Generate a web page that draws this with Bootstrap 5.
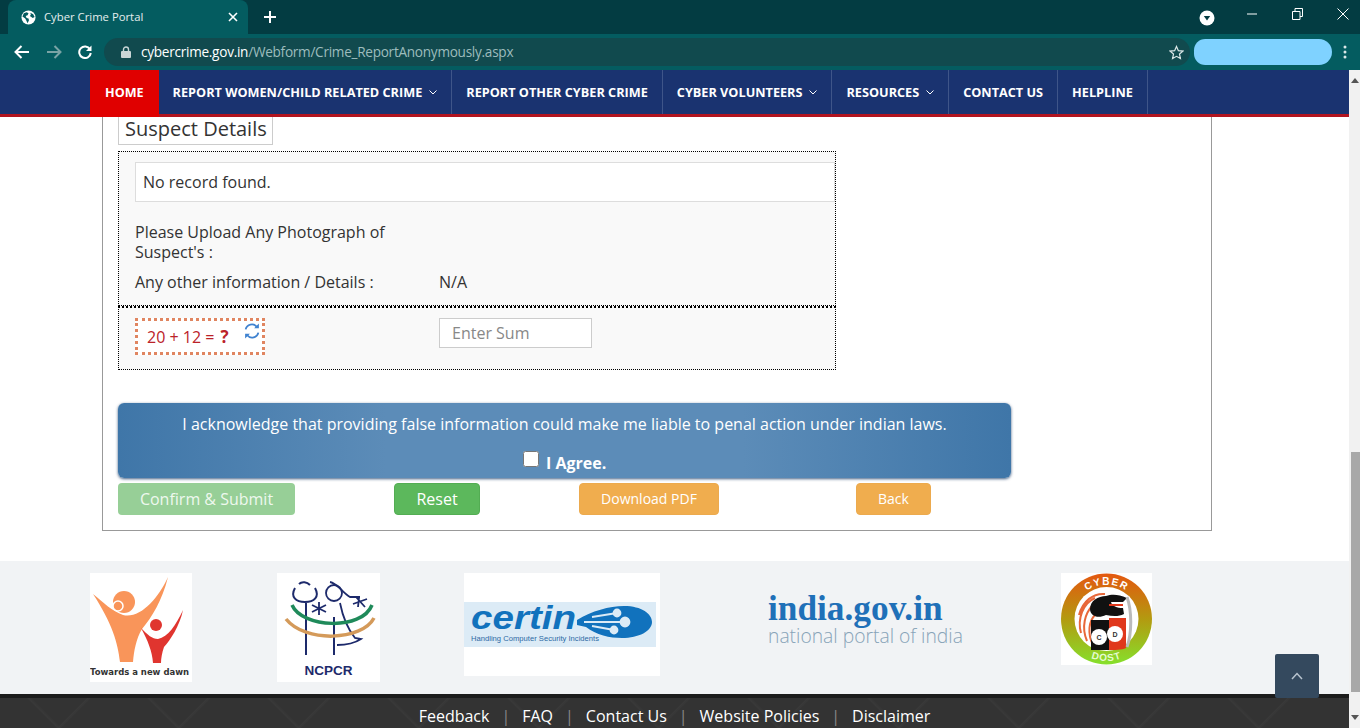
<!DOCTYPE html>
<html lang="en">
<head>
<meta charset="utf-8">
<title>Cyber Crime Portal</title>
<link href="https://cdn.jsdelivr.net/npm/bootstrap@5.3.0/dist/css/bootstrap.min.css" rel="stylesheet">
<style>
html,body{height:728px;overflow:hidden;margin:0}
body{font-family:"Open Sans","Noto Sans",sans-serif;font-size:16px;color:#333;background:#fff}
.tabstrip{height:34px;background:#033c42;padding-left:8px}
.tabshape{width:240px;height:34px;background:#045c60;border-radius:8px 8px 0 0;color:#e4eeee;font-size:11.3px;padding:0 10px 0 13px}
.tabplus{margin-left:16px}
.winbtns{margin-top:-6px}
.wincircle{margin-top:4px;margin-bottom:-4px}
.toolbar{height:36px;background:#045c60;padding-left:14px;padding-right:0}
.omni{width:1086px;height:28px;margin-left:12px;border-radius:14px;background:#114a4e;padding:0 6px 0 17px;font-size:13.6px;color:#9dbcbd}
.omni b{font-weight:400;color:#fff}
.urltxt{margin-left:10px;letter-spacing:-.02em}
.blob{width:138px;height:26px;margin-left:4px;background:#7fd2ff;border-radius:13px 15px 15px 13px}
.kebab{margin-right:13px}
.pagewrap{height:658px}
.mainside{width:1349px}
.sbar{width:11px;background:#f1f1f1;padding:8px 0 8px 2px}
.sthumb{width:9px;height:240px;background:#a8a8a8;margin-top:369px}
.topnav{height:47px;background:#1a3370;border-bottom:3px solid #b1141f;padding-left:90px;flex-wrap:nowrap}
.topnav a{display:flex;align-items:center;gap:7px;height:44px;padding:1px 14px 0;color:#fff;font-weight:700;font-size:12.7px;text-decoration:none;border-right:1px solid #3f5589;white-space:nowrap}
.topnav a.homelink{background:#e00000;height:47px;padding:1px 15px 2px;border-right:0;margin-bottom:-3px;font-size:12.6px}
.formbox{width:1110px;margin-left:102px;border:1px solid #999;border-top:0;padding:0 15px 15px;height:414px}
.legendbox{display:inline-block;height:28px;padding:0 5px 0 6px;border:1px solid #ccc;border-top:0;font-size:20px;line-height:24px;color:#333;margin-bottom:6px;vertical-align:top}
.dotbox{width:718px;border:1px dotted #000;background:#f9f9f9;padding:10px 0 0 16px}
.dotbox.firstbox{height:155px}
.dotbox.secondbox{height:64px;border-top:2px dotted #000;padding-top:10px}
.norec{height:40px;background:#fff;border:1px solid #ddd;padding-left:7px;line-height:38px;margin-bottom:20px}
.labelcol{width:304px;flex:none;line-height:20px}
.labelcol span{display:block;width:280px}
.inforow{margin-top:10px;line-height:20px}
.captcha{width:130px;height:37px;border:3px dotted #e08560;background:#fff;color:#bb2229;padding:4px 0 0 9px;line-height:24px;position:relative}
.captcha b{margin-left:2px;font-size:17px}
.captcha svg{position:absolute;left:105px;top:1px}
.sumbox{width:153px;height:30px;border:1px solid #ccc;border-radius:0;background:#fff;padding:0 12px;font-family:inherit;font-size:16px;color:#777}
.sumbox::placeholder{color:#888;opacity:1}
.ackpanel{width:893px;height:75px;margin-top:33px;border-radius:6px;background:linear-gradient(90deg,#3f76a8 0,#5c8cb8 30%,#5c8cb8 70%,#3f76a8 100%);box-shadow:0 1px 3px rgba(0,40,90,.75);color:#fff;text-align:center;padding-top:10px;line-height:22px}
.ackcheck{width:16px;height:16px;vertical-align:2px;margin:0 3px 0 0;appearance:auto;-webkit-appearance:auto}
.agree{margin-top:16px;font-weight:700}
.actbtns{margin-top:5px;height:32px}
.actbtn{height:32px;padding:0;border-radius:4px;color:#fff;font-family:inherit;border:1px solid transparent}
.btn-confirm{width:177px;background:#97cf97;font-size:16px;color:#eef8ee}
.btn-reset{width:86px;margin-left:99px;background:#5cb85c;border-color:#53ad53;font-size:16px}
.btn-pdf{width:140px;margin-left:99px;background:#f0ad4e;border-color:#ecaa4e;font-size:14px;padding-bottom:2px}
.btn-back{width:75px;margin-left:137px;background:#f0ad4e;border-color:#ecaa4e;font-size:14px;padding-bottom:2px}
.logostrip{height:133px;margin-top:30px;background:#f1f3f5;padding:12px 0 0 90px;align-items:flex-start}
.logo1{width:102px;height:109px;background:#fff}
.logo2{width:103px;height:109px;margin-left:85px;background:#fff}
.logo3{width:196px;height:103px;margin-left:84px;background:#fff}
.logo4{width:198px;margin-left:108px;padding-top:20px}
.logo5{width:91px;height:92px;margin-left:95px;background:#fff}
.indiatop{font-family:"Liberation Serif",serif;font-weight:700;font-size:35.3px;line-height:32px;color:#1f70b8}
.indiabot{font-weight:300;font-size:19.3px;line-height:22px;color:#88a3b8;white-space:nowrap}
.footerbar{height:34px;background-color:#333;border-top:4px solid #1c1c1c;background-image:linear-gradient(135deg,transparent 48%,#393939 49%,transparent 51%),linear-gradient(45deg,transparent 48%,#393939 49%,transparent 51%);background-size:120px 60px;color:#fff;font-size:16px;line-height:36px;gap:12px;overflow:hidden}
.footerbar a{color:#fff;text-decoration:none}
.footerbar i{font-style:normal;color:#888;font-size:16px}
.totop{position:absolute;left:1275px;top:654px;width:44px;height:44px;background:#34495e;border-radius:2px;display:flex;align-items:center;justify-content:center}
</style>
</head>
<body>
<div class="tabstrip d-flex align-items-center">
  <div class="tabshape d-flex align-items-center">
    <svg width="15" height="15" viewBox="0 0 16 16"><circle cx="8" cy="8" r="7.5" fill="#fff"/><path d="M3 3.5l3-1 2 1-1 2-2 1 1 2 2 .5.5 2-1.5 3-1.5-3-1-2-3-2zM10 3l3 1.5 1.5 3-2 1-1.5-1-1.5-1 1-1.5z" fill="#045c60"/></svg>
    <span class="ms-2 flex-grow-1">Cyber Crime Portal</span>
    <svg width="10" height="10" viewBox="0 0 10 10"><path d="M1 1l8 8M9 1l-8 8" stroke="#fff" stroke-width="1.6"/></svg>
  </div>
  <svg class="tabplus" width="12" height="12" viewBox="0 0 12 12"><path d="M6 0v12M0 6h12" stroke="#fff" stroke-width="2"/></svg>
  <div class="ms-auto d-flex align-items-center winbtns">
    <svg class="wincircle" width="16" height="16" viewBox="0 0 16 16"><circle cx="8" cy="8" r="7.5" fill="#fff"/><path d="M4.8 6h6.4L8 10.5z" fill="#033c42"/></svg>
    <svg style="margin-left:32px" width="10" height="10" viewBox="0 0 10 10"><path d="M0 5h10" stroke="#fff"/></svg>
    <svg style="margin-left:35px" width="11" height="12" viewBox="0 0 11 12"><path d="M.5 3.5h7.5v8H.5zM3 3.5V.5h7.5v8H8" fill="none" stroke="#fff"/></svg>
    <svg style="margin-left:34px;margin-right:11px" width="12" height="12" viewBox="0 0 12 12"><path d="M.5.5l11 11M11.5.5l-11 11" stroke="#fff"/></svg>
  </div>
</div>
<div class="toolbar d-flex align-items-center">
  <svg width="16" height="14" viewBox="0 0 16 14"><path d="M15 7H2M7.5 1L1.5 7l6 6" fill="none" stroke="#fff" stroke-width="2"/></svg>
  <svg class="ms-3" width="16" height="14" viewBox="0 0 16 14"><path d="M1 7h13M8.500 1l6 6-6 6" fill="none" stroke="#7aa3a5" stroke-width="2"/></svg>
  <svg class="ms-3" width="14" height="14" viewBox="0 0 14 14"><path d="M12 4.200A5.800 5.800 0 1 0 12.800 8" fill="none" stroke="#fff" stroke-width="2"/><path d="M13.500 .5v5.500H8z" fill="#fff"/></svg>
  <div class="omni d-flex align-items-center">
    <svg width="10" height="12" viewBox="0 0 10 12"><rect y="5" width="10" height="7" rx="1" fill="#c9d6d6"/><path d="M2.500 5V3.500a2.500 2.500 0 0 1 5 0V5" fill="none" stroke="#c9d6d6" stroke-width="1.400"/></svg>
    <span class="urltxt flex-grow-1"><b>cybercrime.gov.in</b>/Webform/Crime_ReportAnonymously.aspx</span>
    <svg width="15" height="15" viewBox="0 0 16 16"><path d="M8 1.500l2 4.500 4.800.5-3.600 3.200 1 4.800L8 12.100l-4.200 2.400 1-4.800L1.200 6.500 6 6z" fill="none" stroke="#dbe7e7" stroke-width="1.300"/></svg>
  </div>
  <div class="blob"></div>
  <svg class="ms-auto kebab" width="4" height="14" viewBox="0 0 4 14"><circle cx="2" cy="2" r="1.500" fill="#dbe7e7"/><circle cx="2" cy="7" r="1.500" fill="#dbe7e7"/><circle cx="2" cy="12" r="1.500" fill="#dbe7e7"/></svg>
</div>
<div class="pagewrap d-flex">
  <div class="mainside">
    <nav class="topnav d-flex">
      <a class="homelink" href="#">HOME</a>
      <a href="#">REPORT WOMEN/CHILD RELATED CRIME <svg width="8" height="5" viewBox="0 0 8 5"><path d="M.5.500L4 4 7.500.5" fill="none" stroke="#fff"/></svg></a>
      <a href="#">REPORT OTHER CYBER CRIME</a>
      <a href="#">CYBER VOLUNTEERS <svg width="8" height="5" viewBox="0 0 8 5"><path d="M.5.500L4 4 7.500.5" fill="none" stroke="#fff"/></svg></a>
      <a href="#">RESOURCES <svg width="8" height="5" viewBox="0 0 8 5"><path d="M.5.500L4 4 7.500.5" fill="none" stroke="#fff"/></svg></a>
      <a href="#">CONTACT US</a>
      <a href="#">HELPLINE</a>
    </nav>
    <div>
      <div class="formbox">
        <div class="legendbox">Suspect Details</div>
        <div class="dotbox firstbox">
          <div class="norec">No record found.</div>
          <div class="d-flex"><div class="labelcol"><span>Please Upload Any Photograph of Suspect's :</span></div></div>
          <div class="d-flex inforow"><div class="labelcol">Any other information / Details :</div><div>N/A</div></div>
        </div>
        <div class="dotbox secondbox d-flex">
          <div class="labelcol">
            <div class="captcha">20 + 12 = <b>?</b>
              <svg width="18" height="18" viewBox="0 0 17 17"><path d="M2.500 7a6 6 0 0 1 10.500-2.500M14.500 10A6 6 0 0 1 4 12.500" fill="none" stroke="#3f82d0" stroke-width="1.700"/><path d="M15 1.500v4.500h-4.500zM2 15.500V11h4.500z" fill="#3f82d0"/></svg>
            </div>
          </div>
          <input class="sumbox" type="text" placeholder="Enter Sum">
        </div>
        <div class="ackpanel">
          <div>I acknowledge that providing false information could make me liable to penal action under indian laws.</div>
          <div class="agree"><input class="ackcheck" type="checkbox"> I Agree.</div>
        </div>
        <div class="actbtns d-flex">
          <button class="actbtn btn-confirm" type="button">Confirm &amp; Submit</button>
          <button class="actbtn btn-reset" type="button">Reset</button>
          <button class="actbtn btn-pdf" type="button">Download PDF</button>
          <button class="actbtn btn-back" type="button">Back</button>
        </div>
      </div>
      <div class="logostrip d-flex">
        <div class="logo1">
          <svg width="102" height="109" viewBox="0 0 102 109">
            <path d="M3 21C14 30 22 38 33 42C50 46 68 26 78 4C72 28 62 44 52 56C46 66 44 78 43 89L30 89C28 70 22 50 3 21Z" fill="#f9955a"/>
            <circle cx="34" cy="29" r="11" fill="#f9955a"/><circle cx="28" cy="33" r="5" fill="#f9955a" stroke="#fff" stroke-width="1.500"/>
            <path d="M51 55C58 62 62 66 68 66C78 64 86 52 93 37C90 52 80 68 74 74C72 80 71 85 71 90L63 90C62 78 58 68 51 55Z" fill="#e0352f"/>
            <circle cx="66" cy="52" r="6" fill="#e0352f"/>
            <text x="0" y="102" textLength="99" lengthAdjust="spacingAndGlyphs" font-family="DejaVu Sans,sans-serif" font-weight="700" font-size="8" fill="#333">Towards a new dawn</text>
          </svg>
        </div>
        <div class="logo2">
          <svg width="103" height="109" viewBox="0 0 103 109">
            <path d="M18 15C13 24 19 29 28 29C37 29 43 24 38 15M22 11C25 8 30 9 33 12M29 29v53M57 44v38" fill="none" stroke="#1d2a6b" stroke-width="2"/>
            <circle cx="57" cy="20" r="8" fill="none" stroke="#1d2a6b" stroke-width="1.800"/>
            <path d="M53 9C60 10 66 20 73 24L83 24M63 30C66 45 70 55 78 65L84 66C78 70 70 72 60 72" fill="none" stroke="#1d2a6b" stroke-width="1.800"/>
            <path d="M35 32l14 7M35 39l14-7M42 29v13M76 31l14-5M79 24l9 10M82 25l-1 9" stroke="#1d2a6b" stroke-width="1.800"/>
            <path d="M15 32C25 55 85 58 95 32" fill="none" stroke="#1f8a5a" stroke-width="3.500"/>
            <path d="M9 46C28 70 85 68 97 45" fill="none" stroke="#d49a5a" stroke-width="3.500"/>
            <text x="51.500" y="102" text-anchor="middle" font-family="Liberation Sans,sans-serif" font-weight="700" font-size="13.500" fill="#1d2a6b">NCPCR</text>
          </svg>
        </div>
        <div class="logo3">
          <svg width="196" height="103" viewBox="0 0 196 103">
            <rect y="29" width="192" height="45" fill="#dcebf6"/>
            <path d="M113 47C128 38 145 33 160 33C178 33 188 41 188 49C188 58 175 65 158 65C146 65 132 62 122 54L113 52Z" fill="#1172bd"/>
            <g stroke="#dcebf6" stroke-width="1.800" fill="#dcebf6"><path d="M120 49h41M128 44l25-4M128 53l22 4" fill="none"/><circle cx="153" cy="40" r="3.500"/><circle cx="161" cy="49" r="4.500"/><circle cx="150" cy="57" r="3.500"/></g>
            <text x="7" y="56" textLength="105" lengthAdjust="spacingAndGlyphs" font-family="Liberation Sans,sans-serif" font-style="italic" font-weight="700" font-size="34" fill="#1172bd">certin</text>
            <text x="7" y="68" textLength="128" lengthAdjust="spacingAndGlyphs" font-family="Liberation Sans,sans-serif" font-size="7" fill="#2c6aa5">Handling Computer Security Incidents</text>
          </svg>
        </div>
        <div class="logo4">
          <div class="indiatop">india.gov.in</div>
          <div class="indiabot">national portal of india</div>
        </div>
        <div class="logo5">
          <svg width="91" height="92" viewBox="0 0 91 92">
            <defs>
              <linearGradient id="ringg" x1="0" y1="0" x2="0" y2="1"><stop offset="0" stop-color="#e4570f"/><stop offset=".5" stop-color="#b39a10"/><stop offset="1" stop-color="#86e02c"/></linearGradient>
              <path id="arcCyber" d="M11 46a34.500 34.500 0 0 1 69 0"/>
              <path id="arcDost" d="M3.500 46A42 42 0 0 0 87.500 46"/>
            </defs>
            <circle cx="45.500" cy="46" r="45.500" fill="url(#ringg)"/>
            <circle cx="45.500" cy="46" r="32" fill="#fff"/>
            <path d="M18 42c4-14 14-22 26-21M20 60c-4-14 2-30 14-35M26 68c-6-14-2-28 6-36M32 72c-6-12-4-24 2-30" fill="none" stroke="#e8683a" stroke-width="2"/>
            <path d="M29 36c0-8 8-13 16-13 6-2 12-2 21 2l-4 4H50c1 4 6 6 12 6l1 6c-6 3-12 2-18 1-8 4-16 1-16-6z" fill="#111"/>
            <path d="M48 31h14v2H48z" fill="#e0381c"/>
            <rect x="30" y="47" width="18" height="30" fill="#111"/>
            <path d="M48 45h17v30c-4 2-12 2-17 2z" fill="#e0381c"/>
            <path d="M66 24c5 14 5 36 0 50" fill="none" stroke="#bbb" stroke-width="3"/>
            <circle cx="38" cy="64" r="8" fill="#fff"/><circle cx="54" cy="61" r="8" fill="#fff"/>
            <text x="38" y="67" text-anchor="middle" font-family="Liberation Sans,sans-serif" font-weight="700" font-size="7" fill="#333">C</text>
            <text x="54" y="64" text-anchor="middle" font-family="Liberation Sans,sans-serif" font-weight="700" font-size="7" fill="#333">D</text>
            <text font-family="Liberation Sans,sans-serif" font-weight="700" font-size="10" letter-spacing="1.500" fill="#fff"><textPath href="#arcCyber" startOffset="50%" text-anchor="middle">CYBER</textPath></text>
            <text font-family="Liberation Sans,sans-serif" font-weight="700" font-size="10" letter-spacing="1" fill="#e6fbd0"><textPath href="#arcDost" startOffset="50%" text-anchor="middle">DOST</textPath></text>
          </svg>
        </div>
      </div>
      <div class="footerbar d-flex justify-content-center">
        <a href="#">Feedback</a><i>|</i><a href="#">FAQ</a><i>|</i><a href="#">Contact Us</a><i>|</i><a href="#">Website Policies</a><i>|</i><a href="#">Disclaimer</a>
      </div>
    </div>
  </div>
  <div class="sbar d-flex flex-column">
    <svg width="8" height="5" viewBox="0 0 8 5"><path d="M4 0l4 5H0z" fill="#555"/></svg>
    <div class="sthumb"></div>
    <svg class="mt-auto" width="8" height="5" viewBox="0 0 8 5"><path d="M0 0h8L4 5z" fill="#555"/></svg>
  </div>
</div>
<a class="totop" href="#" aria-label="Back to top"><svg width="12" height="8" viewBox="0 0 12 8"><path d="M1 7l5-5.500L11 7" fill="none" stroke="#b8c4cf" stroke-width="1.500"/></svg></a>
</body>
</html>
